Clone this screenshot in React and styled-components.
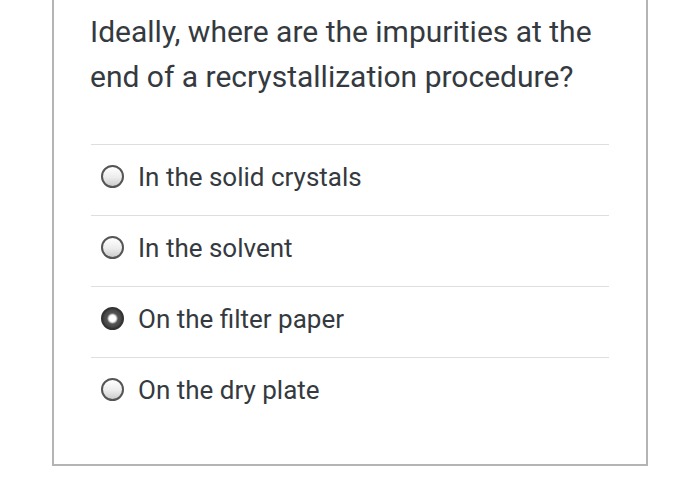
import React from "react";
import styled, { createGlobalStyle } from "styled-components";

const GlobalStyle = createGlobalStyle`
  html, body {
    margin: 0;
    padding: 0;
    background: #ffffff;
  }
  body {
    font-family: Roboto, "Liberation Sans", sans-serif;
    color: #333a40;
  }
`;

const Page = styled.div`
  width: 700px;
  height: 484px;
  background: #ffffff;
  overflow: hidden;
`;

const Card = styled.div`
  margin-left: 52px;
  width: 596px;
  height: 466px;
  border: 2px solid #b4b4b4;
  border-top: none;
  box-sizing: border-box;
  padding: 9px 37px 0 37px;
`;

const Question = styled.p`
  margin: 0 0 0 -1px;
  font-size: 30px;
  line-height: 45px;
  color: #343a40;
`;

const Options = styled.ul`
  list-style: none;
  margin: 45px 0 0 0;
  padding: 0;
`;

const Option = styled.li`
  display: flex;
  align-items: center;
  height: 71px;
  box-sizing: border-box;
  border-top: 1.5px solid #dedede;
  padding: 0 0 7px 10px;
  gap: 14px;
  font-size: 26px;
  color: #343a40;
`;

const Radio = styled.span`
  width: 23px;
  height: 23px;
  border-radius: 50%;
  box-sizing: border-box;
  border: 2px solid ${(p) => (p.checked ? "#333333" : "#555555")};
  background: ${(p) =>
    p.checked
      ? "radial-gradient(circle at 50% 50%, #ffffff 0 3px, #cfcfcf 4px, #555555 5.5px, #2e2e2e 100%)"
      : "linear-gradient(180deg, #ffffff 0%, #ececec 55%, #cccccc 100%)"};
  flex-shrink: 0;
`;

const options = [
  { label: "In the solid crystals", checked: false },
  { label: "In the solvent", checked: false },
  { label: "On the filter paper", checked: true },
  { label: "On the dry plate", checked: false },
];

export default function App() {
  return (
    <Page>
      <GlobalStyle />
      <Card>
        <Question>
          Ideally, where are the impurities at the end of a recrystallization
          procedure?
        </Question>
        <Options>
          {options.map((o) => (
            <Option key={o.label}>
              <Radio checked={o.checked} />
              {o.label}
            </Option>
          ))}
        </Options>
      </Card>
    </Page>
  );
}
